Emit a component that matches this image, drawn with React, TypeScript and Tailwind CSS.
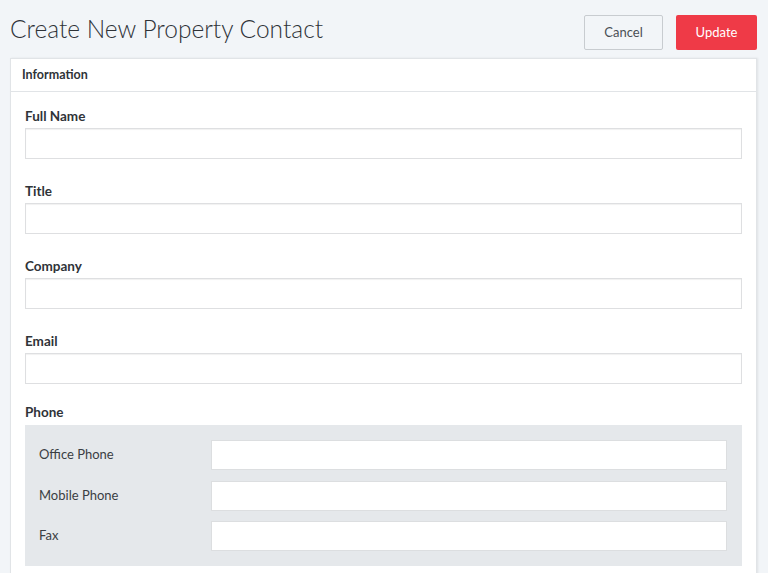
import React from "react";

const fields = ["Full Name", "Title", "Company", "Email"];
const phones = ["Office Phone", "Mobile Phone", "Fax"];

const App = () => {
  return (
    <div
      className="min-h-[573px] bg-[#f2f5f8] pl-[10px] pr-[11px] text-[#333]"
      style={{ fontFamily: "Lato, 'Open Sans', sans-serif" }}
    >
      <header className="flex items-start justify-between pt-[15px] h-[58px]">
        <h1 className="text-[24.5px] font-light leading-[30px] text-[#2f3338] -mt-[1px]">
          Create New Property Contact
        </h1>
        <div className="flex gap-[13px]">
          <button className="h-[35px] w-[79px] rounded-[2px] border border-[#c8ccd0] bg-[#f2f5f8] text-[13px] text-[#4a4f55]">
            Cancel
          </button>
          <button className="h-[35px] w-[81px] rounded-[2px] bg-[#ef3a47] text-[13px] text-white">
            Update
          </button>
        </div>
      </header>

      <section className="border border-[#e1e4e7] bg-white shadow-[1px_0_2px_rgba(0,0,0,0.08)]">
        <div className="h-[33px] border-b border-[#e1e4e7] px-[11px] text-[12.5px] font-bold leading-[32px] text-[#2f3338]">
          Information
        </div>
        <div className="px-[14px] pt-[14px] pb-[8px]">
          {fields.map((f) => (
            <div key={f} className="mb-[22px]">
              <label className="block text-[13.5px] font-bold leading-[20px] text-[#2f3338] mb-[2px]">
                {f}
              </label>
              <input
                type="text"
                className="block h-[31px] w-full border border-[#dedfe1] shadow-[inset_0_1px_1px_rgba(0,0,0,0.06)] outline-none"
              />
            </div>
          ))}
          <label className="-mt-[4px] block text-[13.5px] font-bold leading-[20px] text-[#2f3338] mb-[3px]">
            Phone
          </label>
          <div className="flex flex-col gap-[10.5px] bg-[#e5e8eb] pl-[14px] pr-[15px] pt-[15px] pb-[15px]">
            {phones.map((p) => (
              <div key={p} className="flex items-center">
                <span className="w-[172px] shrink-0 text-[13px] text-[#3a3e43]">{p}</span>
                <input
                  type="text"
                  className="h-[30px] flex-1 border border-[#dcdee0] bg-white outline-none"
                />
              </div>
            ))}
          </div>
        </div>
      </section>
    </div>
  );
};

export default App;
